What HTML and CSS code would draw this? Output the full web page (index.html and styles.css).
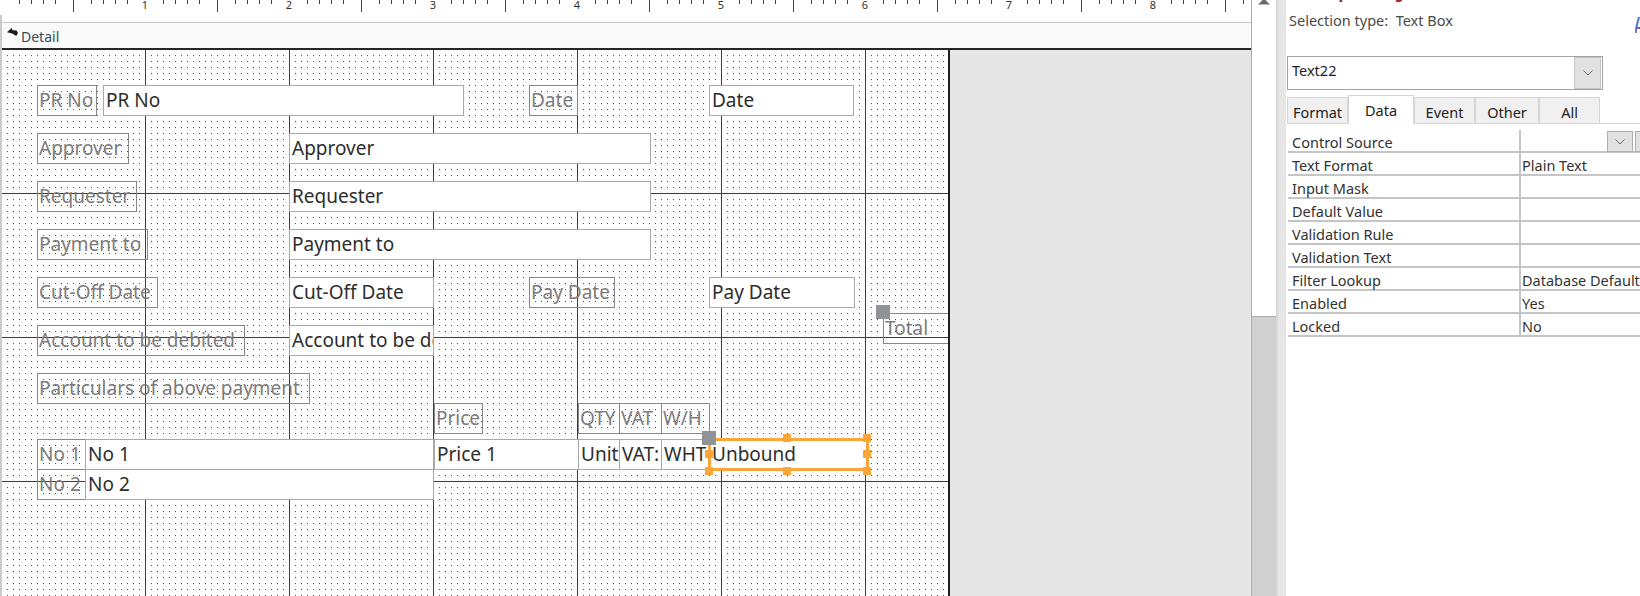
FILE: index.html
```html
<!DOCTYPE html>
<html>
<head>
    <meta charset="utf-8">
    <link rel="stylesheet" href="styles.css">
</head>
<body>
    <div class="window">
        <div class="designer">
            <div class="ruler">
                <span>1</span><span>2</span><span>3</span><span>4</span>
                <span>5</span><span>6</span><span>7</span><span>8</span>
            </div>
            <div class="surface">
                <div class="ruler-gap"></div>
                <div class="section-bar">
                    <svg class="section-icon" width="11" height="8" viewBox="0 0 11 8">
                        <path d="M0 4.2 L4.6 0 L5.6 2.2 L9.6 2.4 L11 5 L9.2 8 L5.2 5.6 Z" fill="#1a1a1a"/>
                    </svg>
                    <span class="section-name">Detail</span>
                </div>
                <div class="section-body">
                    <div class="form-canvas">
                        <!-- labels (transparent back style) -->
                        <div class="ctl lbl lbl-prno">PR No</div>
                        <div class="ctl lbl lbl-date">Date</div>
                        <div class="ctl lbl lbl-approver">Approver</div>
                        <div class="ctl lbl lbl-requester">Requester</div>
                        <div class="ctl lbl lbl-payto">Payment to</div>
                        <div class="ctl lbl lbl-cutoff">Cut-Off Date</div>
                        <div class="ctl lbl lbl-paydate">Pay Date</div>
                        <div class="ctl lbl lbl-account">Account to be debited</div>
                        <div class="ctl lbl lbl-partic">Particulars of above payment</div>
                        <div class="ctl lbl lbl-price">Price</div>
                        <div class="ctl lbl lbl-qty">QTY</div>
                        <div class="ctl lbl lbl-vat">VAT</div>
                        <div class="ctl lbl lbl-wh">W/H</div>
                        <div class="ctl lbl lbl-no1">No 1</div>
                        <div class="ctl lbl lbl-no2">No 2</div>
                        <div class="ctl lbl lbl-total">Total</div>
                        <div class="move-handle move-total"></div>

                        <!-- text boxes -->
                        <div class="ctl txt txt-prno">PR No</div>
                        <div class="ctl txt txt-date">Date</div>
                        <div class="ctl txt txt-approver">Approver</div>
                        <div class="ctl txt txt-requester">Requester</div>
                        <div class="ctl txt txt-payto">Payment to</div>
                        <div class="ctl txt txt-cutoff">Cut-Off Date</div>
                        <div class="ctl txt txt-paydate">Pay Date</div>
                        <div class="ctl txt txt-account">Account to be debited</div>
                        <div class="ctl txt txt-price1">Price 1</div>
                        <div class="ctl txt txt-unit">Unit</div>
                        <div class="ctl txt txt-vat">VAT:</div>
                        <div class="ctl txt txt-wht">WHT</div>
                        <div class="ctl txt txt-no1">No 1</div>
                        <div class="ctl txt txt-no2">No 2</div>

                        <div class="selection">
                            <div class="ctl txt txt-selected">Unbound</div>
                            <div class="move-handle move-sel"></div>
                            <div class="handle h-tm"></div>
                            <div class="handle h-tr"></div>
                            <div class="handle h-mr"></div>
                            <div class="handle h-br"></div>
                            <div class="handle h-bm"></div>
                            <div class="handle h-bl"></div>
                            <div class="handle h-ml"></div>
                        </div>
                    </div>
                    <div class="backdrop"></div>
                </div>
            </div>
        </div>

        <div class="vscroll">
            <div class="vs-thumb">
                <svg class="vs-arrow" width="24" height="6" viewBox="0 0 24 6">
                    <polygon points="6,4.5 18,4.5 12,-1.5" fill="#6b6b6b"/>
                </svg>
            </div>
        </div>
        <div class="splitter"></div>

        <div class="prop-sheet">
            <div class="ps-title">Property Sheet</div>
            <div class="ps-selection">
                <span>Selection type:&nbsp; Text Box</span>
                <svg class="ps-corner" width="5" height="16" viewBox="0 0 5 16">
                    <path d="M5 0 L3 0 L0.4 10 L2.4 10 Z" fill="#3d76d6"/>
                    <path d="M0.4 10 L5 10 L5 12 L0.2 12 Z M0.2 12 L2 12 L1.6 16 L0 16 Z" fill="#7b52c4"/>
                </svg>
            </div>
            <div class="ps-combo">
                <span class="ps-combo-text">Text22</span>
                <span class="ps-drop">
                    <svg width="10" height="6" viewBox="0 0 10 6"><polyline points="0.5,0.5 5,5 9.5,0.5" fill="none" stroke="#6a6a6a" stroke-width="1"/></svg>
                </span>
            </div>
            <div class="ps-tabs">
                <div class="ps-tab tab-format">Format</div>
                <div class="ps-tab tab-data active">Data</div>
                <div class="ps-tab tab-event">Event</div>
                <div class="ps-tab tab-other">Other</div>
                <div class="ps-tab tab-all">All</div>
            </div>
            <div class="ps-grid">
                <div class="ps-row">
                    <div class="ps-name">Control Source</div>
                    <div class="ps-value ps-buttons">
                        <span class="ps-btn">
                            <svg width="10" height="6" viewBox="0 0 10 6"><polyline points="0.5,0.5 5,5 9.5,0.5" fill="none" stroke="#6a6a6a" stroke-width="1"/></svg>
                        </span>
                        <span class="ps-btn"></span>
                    </div>
                </div>
                <div class="ps-row"><div class="ps-name">Text Format</div><div class="ps-value">Plain Text</div></div>
                <div class="ps-row"><div class="ps-name">Input Mask</div><div class="ps-value"></div></div>
                <div class="ps-row"><div class="ps-name">Default Value</div><div class="ps-value"></div></div>
                <div class="ps-row"><div class="ps-name">Validation Rule</div><div class="ps-value"></div></div>
                <div class="ps-row"><div class="ps-name">Validation Text</div><div class="ps-value"></div></div>
                <div class="ps-row"><div class="ps-name">Filter Lookup</div><div class="ps-value">Database Default</div></div>
                <div class="ps-row"><div class="ps-name">Enabled</div><div class="ps-value">Yes</div></div>
                <div class="ps-row"><div class="ps-name">Locked</div><div class="ps-value">No</div></div>
            </div>
        </div>
    </div>
</body>
</html>
```

FILE: styles.css
```css
body {
    margin: 0;
    font-family: "Noto Sans", "Open Sans", sans-serif;
    background: #fff;
    overflow: hidden;
}
.window {
    display: flex;
    width: 1640px;
    height: 596px;
    overflow: hidden;
}

/* ---- form designer ---- */
.designer {
    width: 1251px;
    flex-shrink: 0;
    display: flex;
    flex-direction: column;
}
.ruler {
    height: 15px;
    flex-shrink: 0;
    display: flex;
    padding-left: 73px;
    overflow: hidden;
    background-color: #fff;
    background-image:
        linear-gradient(to right,
            transparent 18px, #444 18px 19px,
            transparent 19px 30px, #444 30px 31px,
            transparent 31px 42px, #444 42px 43px,
            transparent 43px 54px, #444 54px 55px,
            transparent 55px 90px, #444 90px 91px,
            transparent 91px 102px, #444 102px 103px,
            transparent 103px 114px, #444 114px 115px,
            transparent 115px 126px, #444 126px 127px,
            transparent 127px),
        linear-gradient(to right, transparent 72px, #444 72px 73px, transparent 73px);
    background-size: 144px 4px, 144px 12px;
    background-position: 1px 0;
    background-repeat: repeat-x;
    font-size: 11px;
    line-height: 11px;
    color: #333;
}
.ruler span {
    width: 144px;
    flex-shrink: 0;
    text-align: center;
    margin-top: -1px;
}
.surface {
    flex: 1;
    min-height: 0;
    display: flex;
    flex-direction: column;
    border-left: 2px solid #cbcbcb;
}
.ruler-gap {
    height: 7px;
    flex-shrink: 0;
}
.section-bar {
    height: 28px;
    box-sizing: border-box;
    flex-shrink: 0;
    display: flex;
    align-items: flex-start;
    padding: 5px 0 0 5px;
    border-top: 1px solid #c6c6c6;
    border-bottom: 2px solid #262626;
    background: #fafafa;
}
.section-icon {
    display: block;
    margin-right: 3px;
}
.section-name {
    font-size: 14px;
    line-height: 18px;
    color: #3a4b60;
}
.section-body {
    flex: 1;
    min-height: 0;
    display: flex;
}
.form-canvas {
    width: 946px;
    flex-shrink: 0;
    position: relative;
    overflow: hidden;
    border-right: 2px solid #1e1e1e;
    background-color: #fff;
    background-image:
        linear-gradient(to right, #3d3d3d 1px, transparent 1px),
        linear-gradient(to bottom, #3d3d3d 1px, transparent 1px),
        linear-gradient(to right, transparent 1px, #fff 1px),
        linear-gradient(to bottom, #505050 1px, #fff 1px);
    background-size: 144px 100%, 100% 144px, 6px 6px, 6px 6px;
    background-position: 143px 0, 0 143px, 5px 5px, 5px 5px;
    background-repeat: repeat-x, repeat-y, repeat, repeat;
}
.backdrop {
    flex: 1;
    background: #e6e6e6;
}

/* controls on the design grid */
.ctl {
    position: absolute;
    height: 31px;
    box-sizing: border-box;
    padding-top: 2px;
    font-size: 19px;
    line-height: 24px;
    white-space: nowrap;
    overflow: hidden;
}
.lbl {
    border: 1px solid #888;
    color: #7c7c7c;
    padding-left: 1px;
}
.txt {
    border: 1px solid #a8a8a8;
    background: #fff;
    color: #2e2e2e;
    padding-left: 2px;
}
.lbl-prno { left: 35px; top: 35px; width: 60px; }
.lbl-date { left: 527px; top: 35px; width: 49px; }
.lbl-approver { left: 35px; top: 83px; width: 92px; }
.lbl-requester { left: 35px; top: 131px; width: 100px; }
.lbl-payto { left: 35px; top: 179px; width: 111px; }
.lbl-cutoff { left: 35px; top: 227px; width: 121px; }
.lbl-paydate { left: 527px; top: 227px; width: 86px; }
.lbl-account { left: 35px; top: 275px; width: 208px; }
.lbl-partic { left: 35px; top: 323px; width: 273px; }
.lbl-price { left: 432px; top: 353px; width: 49px; }
.lbl-qty { left: 576px; top: 353px; width: 42px; }
.lbl-vat { left: 617px; top: 353px; width: 43px; }
.lbl-wh { left: 659px; top: 353px; width: 49px; }
.lbl-no1 { left: 35px; top: 389px; width: 49px; }
.lbl-no2 { left: 35px; top: 419px; width: 49px; }
.lbl-total { left: 881px; top: 263px; width: 80px; }

.txt-prno { left: 101px; top: 35px; width: 361px; }
.txt-date { left: 707px; top: 35px; width: 145px; }
.txt-approver { left: 287px; top: 83px; width: 362px; }
.txt-requester { left: 287px; top: 131px; width: 362px; }
.txt-payto { left: 287px; top: 179px; width: 362px; }
.txt-cutoff { left: 287px; top: 227px; width: 145px; }
.txt-paydate { left: 707px; top: 227px; width: 146px; }
.txt-account { left: 287px; top: 275px; width: 145px; }
.txt-price1 { left: 432px; top: 389px; width: 145px; }
.txt-unit { left: 576px; top: 389px; width: 42px; }
.txt-vat { left: 617px; top: 389px; width: 43px; }
.txt-wht { left: 659px; top: 389px; width: 49px; }
.txt-no1 { left: 83px; top: 389px; width: 349px; }
.txt-no2 { left: 83px; top: 419px; width: 349px; }

.selection {
    position: absolute;
    left: 707px;
    top: 389px;
    width: 159px;
    height: 31px;
}
.txt-selected {
    left: 0;
    top: 0;
    width: 100%;
    outline: 3px solid #fba53b;
    outline-offset: -2px;
}
.move-handle {
    position: absolute;
    width: 14px;
    height: 14px;
    background: #8f9297;
}
.move-total { left: 874px; top: 255px; }
.move-sel { left: -7px; top: -8px; }
.handle {
    position: absolute;
    width: 8px;
    height: 8px;
    background: #fba53b;
}
.h-tm { left: 74px; top: -5px; }
.h-tr { left: 154px; top: -5px; }
.h-mr { left: 154px; top: 11px; }
.h-br { left: 154px; top: 28px; }
.h-bm { left: 74px; top: 28px; }
.h-bl { left: -4px; top: 28px; }
.h-ml { left: -4px; top: 11px; }

/* ---- scrollbar + splitter ---- */
.vscroll {
    width: 24px;
    flex-shrink: 0;
    border-left: 1px solid #acacac;
    border-right: 2px solid #d8d8d8;
    background: #d0d0d0;
}
.vs-thumb {
    height: 316px;
    background: #fff;
    border-bottom: 1px solid #acacac;
}
.vs-arrow {
    display: block;
    overflow: visible;
}
.splitter {
    width: 8px;
    flex-shrink: 0;
    background: #e6e6e6;
}

/* ---- property sheet ---- */
.prop-sheet {
    width: 354px;
    flex-shrink: 0;
    display: flex;
    flex-direction: column;
    overflow: hidden;
    background: #fff;
    font-size: 14.5px;
    color: #333;
}
.ps-title {
    height: 30px;
    flex-shrink: 0;
    margin: -31px 0 0 3px;
    font-size: 30px;
    line-height: 30px;
    color: #a52a30;
    white-space: nowrap;
}
.ps-selection {
    height: 20px;
    flex-shrink: 0;
    display: flex;
    margin-top: 11px;
    padding-left: 3px;
    line-height: 20px;
    color: #4a4a4a;
    white-space: nowrap;
}
.ps-corner {
    display: block;
    margin: 7px 0 0 auto;
}
.ps-combo {
    width: 316px;
    height: 34px;
    box-sizing: border-box;
    flex-shrink: 0;
    display: flex;
    margin: 26px 0 0 1px;
    border: 1px solid #a3a3a3;
}
.ps-combo-text {
    flex: 1;
    padding: 3px 0 0 4px;
    line-height: 20px;
    color: #1e1e1e;
}
.ps-drop {
    width: 27px;
    box-sizing: border-box;
    margin-right: 1px;
    display: flex;
    align-items: center;
    justify-content: center;
    background: #e1e1e1;
    border: 1px solid #c4c4c4;
}
.ps-drop svg,
.ps-btn svg {
    display: block;
}
.ps-tabs {
    height: 28px;
    flex-shrink: 0;
    display: flex;
    align-items: flex-end;
    margin: 5px 0 0 1px;
    border-bottom: 1px solid #d6d6d6;
}
.ps-tab {
    height: 26px;
    box-sizing: border-box;
    padding-top: 4px;
    line-height: 20px;
    text-align: center;
    color: #222;
    background: #f0f0f0;
    border: 1px solid #d6d6d6;
    border-bottom: none;
}
.ps-tab.active {
    height: 29px;
    margin-bottom: -1px;
    padding-top: 4px;
    background: #fff;
    position: relative;
}
.tab-format { width: 61px; }
.tab-data { width: 66px; }
.tab-event { width: 61px; }
.tab-other { width: 64px; }
.tab-all { width: 61px; }
.ps-grid {
    width: 380px;
    flex-shrink: 0;
    margin: 6px 0 0 2px;
}
.ps-row {
    display: flex;
    height: 23px;
    box-sizing: border-box;
    border-bottom: 2px solid #c5c5c5;
    white-space: nowrap;
}
.ps-name {
    width: 233px;
    box-sizing: border-box;
    padding: 3px 0 0 4px;
    line-height: 19px;
    border-right: 2px solid #c5c5c5;
}
.ps-value {
    flex: 1;
    padding: 3px 0 0 1px;
    line-height: 19px;
}
.ps-buttons {
    display: flex;
    gap: 2px;
    padding: 1px 0 0 86px;
}
.ps-btn {
    width: 26px;
    height: 21px;
    box-sizing: border-box;
    display: flex;
    align-items: center;
    justify-content: center;
    background: #e1e1e1;
    border: 1px solid #adadad;
}
```
